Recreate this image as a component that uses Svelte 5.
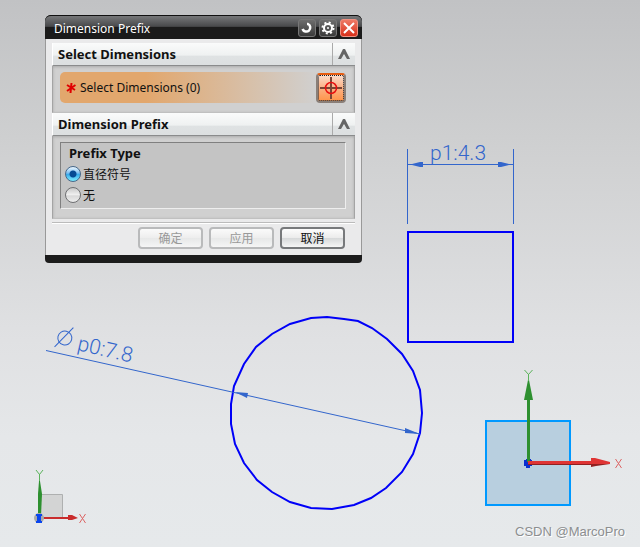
<script lang="ts">
let prefix = $state("diameter");
let open = $state([true, true]);

const actions = [
	{ label: "确定", disabled: true },
	{ label: "应用", disabled: true },
	{ label: "取消", disabled: false },
];
</script>

{#snippet header(title: string, index: number)}
	<div class="header">
		<h2>{title}</h2>
		<button
			class="collapse"
			aria-label="Toggle {title}"
			aria-expanded={open[index]}
			onclick={() => (open[index] = !open[index])}
		>
			<svg viewBox="0 0 12 10" width="12" height="10" class:closed={!open[index]}>
				<path d="M0 10 5 0h2l5 10H9L6 5 3 10Z" fill="#666" />
			</svg>
		</button>
	</div>
{/snippet}

<main>
	<svg class="scene" viewBox="0 0 640 547">
		<g class="sketch">
			<rect x="408" y="232" width="105" height="110" />
			<polygon points="327,317 344,319 358,321 372,328 387,339 402,354 413,371 420,390 422,413 420,433 413,454 402,472 386,488 371,498 354,505 332,509 311,508 290,502 272,492 257,480 244,463 235,444 231,424 231,404 234,386 244,364 256,347 272,334 290,324 311,318" />
		</g>

		<g class="dimension">
			<path d="M407.500 149v75M513.500 149v75M408 164.500h105" />
			<path class="arrow" d="m410 164.500 10-2.500h3v5h-3ZM511 164.500l-10-2.500h-3v5h3Z" />
			<text x="430" y="160">p1:4.3</text>
			<path d="M46 350.500 420 434" />
			<path class="arrow" d="m235 392 13 1-1 5ZM420 434l-15-6v5Z" />
			<g transform="translate(55 345) rotate(13)">
				<circle cx="8" cy="-9" r="7" />
				<path d="M0 2 14-21" />
				<text x="22" y="0">p0:7.8</text>
			</g>
		</g>

		<g class="datum">
			<rect x="486" y="421" width="84" height="84" />
			<path d="M526 459h5v1h1v6h-2v2h-4v-2h-2v-6h2Z" fill="#0a2fd0" />
			<path d="M527 462v-62h-3l4-20h1l4 20h-3v62Z" fill="#2e9030" />
			<path d="M528 461h63v-3h4l15 4v2h-82Z" fill="#df3434" />
			<path d="M528 464h82l-14 2-5 1v-2h-63Z" fill="#922020" />
			<path d="m524.500 370 4 4.500 4-4.500M528.500 374v7" stroke="#5bb35b" />
			<path d="m615.500 459 6 9M621.500 459l-6 9" stroke="#dc6464" />
		</g>

		<g class="triad">
			<path d="M39.500 494.500h23v23h-23Z" fill="#d3d4d4" stroke="#aeb0b0" />
			<path d="M38 516v-22l1-13h1l2 13-1 22Z" fill="#2e9030" />
			<path d="M41 517h27v-2h4l6 3-6 2h-4v-1H41Z" fill="#c92c2c" />
			<circle cx="39" cy="518" r="5" fill="#a9aaab" />
			<path d="M36 514h6v2h-1v5h1v2h-6v-2h1v-5h-1Z" fill="#0a45ee" />
			<path d="m36 470 3.500 4.500 3.500-4.500M39.500 474v7" stroke="#5bb35b" />
			<path d="m79.500 514 6 9M85.500 514l-6 9" stroke="#dc6464" />
		</g>
	</svg>

	<section class="dialog" aria-label="Dimension Prefix">
		<div class="titlebar">
			<h1>Dimension Prefix</h1>
			<button aria-label="Reset">
				<svg viewBox="0 0 16 16" width="16" height="16">
					<path d="M8 4h1a4 4 0 1 1-5.500 5" fill="none" stroke="#fff" stroke-width="2.500" />
				</svg>
			</button>
			<button aria-label="Settings">
				<svg viewBox="0 0 16 16" width="16" height="16" fill="none" stroke="#fff">
					<circle cx="8" cy="8" r="5.500" stroke-width="2" stroke-dasharray="2 2.320" />
					<circle cx="8" cy="8" r="4" stroke-width="2" />
					<circle cx="8" cy="8" r="1" fill="#fff" stroke="none" />
				</svg>
			</button>
			<button class="close" aria-label="Close">
				<svg viewBox="0 0 16 16" width="16" height="16">
					<path d="m3 3 10 10M13 3 3 13" stroke="#fff" stroke-width="2" />
				</svg>
			</button>
		</div>

		<div class="body">
			{@render header("Select Dimensions", 0)}
			{#if open[0]}
				<div class="panel">
					<div class="selection">
						<svg viewBox="0 0 10 10" width="10" height="10">
							<path d="M5.500 0 4.500 10M1 2l8 5M9.500 2 1 8" stroke="#e00000" stroke-width="2" />
						</svg>
						<span>Select Dimensions (0)</span>
						<button class="pick" aria-label="Select dimensions">
							<svg viewBox="0 0 22 22" width="22" height="22" fill="none">
								<path d="M11 0v22M0 11h22" stroke="#7a4636" stroke-width="2" />
								<circle cx="11" cy="11" r="5.500" stroke="#e81010" stroke-width="1.500" />
							</svg>
						</button>
					</div>
				</div>
			{/if}

			{@render header("Dimension Prefix", 1)}
			{#if open[1]}
				<div class="panel">
					<fieldset>
						<legend>Prefix Type</legend>
						<label>
							<input type="radio" name="prefix" value="diameter" bind:group={prefix} />
							直径符号
						</label>
						<label>
							<input type="radio" name="prefix" value="none" bind:group={prefix} />
							无
						</label>
					</fieldset>
				</div>
			{/if}

			<div class="actions">
				{#each actions as action}
					<button disabled={action.disabled}>{action.label}</button>
				{/each}
			</div>
		</div>
	</section>

	<p class="credit">CSDN @MarcoPro</p>
</main>

<style>
:global(body) {
	margin: 0;
}

main {
	position: relative;
	box-sizing: border-box;
	min-height: 100vh;
	padding: 15px 45px;
	overflow: hidden;
	font: 12px/16px "Noto Sans", "Noto Sans CJK SC", sans-serif;
	color: #111;
	background: linear-gradient(#c1c2c4, #cecfd0 25%, #e0e1e3 62%, #e5e7e9 80%, #e6e9eb);
}

/* Drawing canvas behind the dialog */
.scene {
	position: absolute;
	top: 0;
	left: 0;
	width: 100%;
	fill: none;
}

.sketch {
	stroke: #0000f8;
	stroke-width: 2;
}

.dimension {
	stroke: #3366cc;

	& text {
		font: 300 21px Roboto, sans-serif;
		fill: #3366cc;
		stroke: none;
	}

	& .arrow {
		fill: #3366cc;
		stroke: none;
	}
}

.datum rect {
	fill: #b8cfdf;
	stroke: #0099ff;
	stroke-width: 2;
}

.dialog {
	position: relative;
	box-sizing: border-box;
	width: 317px;
	border-bottom: 8px solid #1c1c1c;
	border-radius: 6px 6px 4px 4px;
	background: #1c1c1c;
}

h1,
h2 {
	flex: 1;
	margin: 0;
	font-size: 12px;
	line-height: 16px;
}

button {
	box-sizing: border-box;
	padding: 0;
	font: inherit;
	color: inherit;
}

svg {
	display: block;
}

.titlebar {
	display: flex;
	align-items: center;
	gap: 3px;
	height: 24px;
	padding: 0 4px 0 9px;
	border-radius: 6px 6px 0 0;
	border-top: 1px solid #111;
	box-sizing: border-box;
	color: #fff;
	background: linear-gradient(#77787a, #48494b 45%, #1b1b1b 50%, #1b1b1b);

	& h1 {
		padding-top: 2px;
		font-weight: 400;
	}

	& button {
		width: 18px;
		height: 18px;
		border: 1px solid #777;
		border-radius: 3px;
		background: linear-gradient(#6d6d6d, #3b3b3b);
	}

	& .close {
		border-color: #f09080;
		background: linear-gradient(#ee7a66, #d8301a);
	}
}

.body {
	padding: 4px 6px 6px;
	border: 1px solid #999;
	border-width: 0 1px;
	background: #eaeaeb;
}

.header {
	display: flex;
	height: 23px;
	box-sizing: border-box;
	border-left: 1px solid #fff;
	border-bottom: 1px solid #8a8b8c;
	background: linear-gradient(#fafbfb, #eff1f1 55%, #dfe2e3 60%, #dcdfe0);

	& h2 {
		padding: 3px 5px;
		font-size: 13px;
	}
}

.collapse {
	display: grid;
	place-items: center;
	width: 23px;
	border: 0;
	border-left: 1px solid #aaa;
	background: none;
}

.closed {
	transform: rotate(180deg);
}

.panel {
	padding: 6px 8px 6px 7px;
	border: 1px solid #a4a4a4;
	border-top: 0;
	border-bottom: 1px solid #c0c0c0;
	background: #d0d0d0;
	box-shadow: inset 0 1px 3px #aaa;
}

.selection {
	display: flex;
	align-items: center;
	gap: 4px;
	height: 31px;
	margin-bottom: 3px;
	padding-left: 6px;
	border-radius: 5px;
	background: linear-gradient(90deg, #e2a76d 30%, #d0d0d0 90%);

	& span {
		flex: 1;
	}
}

.pick {
	display: grid;
	place-items: center;
	width: 30px;
	height: 30px;
	border: 2px solid #8a7f78;
	border-top-color: #e65c10;
	border-radius: 4px;
	outline: 1px dotted #123;
	outline-offset: -3px;
	background: linear-gradient(#fbdccb, #fbb184 50%, #ff9448);
}

fieldset {
	min-width: 0;
	margin: 0 0 3px;
	padding: 2px 4px 3px;
	border: 1px solid #808080;
	border-right-color: #eee;
	border-bottom-color: #eee;
	background: #c4c4c4;
}

legend {
	float: left;
	width: 100%;
	padding: 0 4px 1px;
	font-size: 13px;
	font-weight: 700;
	line-height: 17px;
}

label {
	display: flex;
	clear: both;
	align-items: center;
	gap: 2px;
	height: 21px;
	font-family: "Noto Sans CJK SC", sans-serif;
}

input {
	appearance: none;
	width: 16px;
	height: 16px;
	margin: 0;
	border: 1px solid #6f7072;
	border-radius: 50%;
	background: linear-gradient(#c8c8c8, #f2f2f2 50%, #d8d8d8 55%, #eee);

	&:checked {
		border-color: #46688a;
		background:
			radial-gradient(circle, #064a94 3px, transparent 4px),
			linear-gradient(#eef8ff, #77bdf2 45%, #35a8ea 50%, #7cecff);
	}
}

.actions {
	display: flex;
	justify-content: flex-end;
	gap: 6px;
	margin-top: 3px;
	padding: 4px 10px 0 0;
	border-top: 1px solid #bbb;
	box-shadow: inset 0 1px #fff;

	& button {
		width: 65px;
		height: 22px;
		border: 2px solid #77797b;
		border-radius: 4px;
		background: linear-gradient(#fcfcfc, #ececec 48%, #d7d9da 52%, #f5f5f5);
		font-family: "Noto Sans CJK SC", sans-serif;
		line-height: 18px;
	}

	& button:disabled {
		border-color: #b9babb;
		color: #999;
		background: linear-gradient(#fafafa, #eee 48%, #e7e8e8 52%, #f5f5f5);
	}
}

.credit {
	position: absolute;
	right: 15px;
	bottom: 6px;
	margin: 0;
	font: 13px/18px "Liberation Sans", Arial, sans-serif;
	color: #8c8e90;
	text-shadow: 1px 1px #fff;
}
</style>
